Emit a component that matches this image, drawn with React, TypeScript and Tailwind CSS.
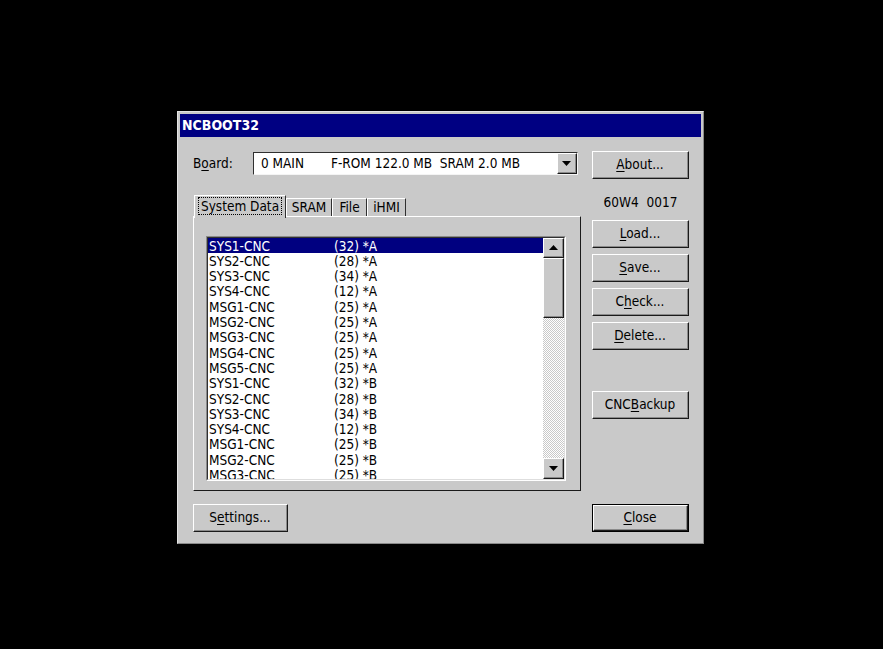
import React from "react";

const rows: [string, string][] = [
  ["SYS1-CNC", "(32) *A"],
  ["SYS2-CNC", "(28) *A"],
  ["SYS3-CNC", "(34) *A"],
  ["SYS4-CNC", "(12) *A"],
  ["MSG1-CNC", "(25) *A"],
  ["MSG2-CNC", "(25) *A"],
  ["MSG3-CNC", "(25) *A"],
  ["MSG4-CNC", "(25) *A"],
  ["MSG5-CNC", "(25) *A"],
  ["SYS1-CNC", "(32) *B"],
  ["SYS2-CNC", "(28) *B"],
  ["SYS3-CNC", "(34) *B"],
  ["SYS4-CNC", "(12) *B"],
  ["MSG1-CNC", "(25) *B"],
  ["MSG2-CNC", "(25) *B"],
  ["MSG3-CNC", "(25) *B"],
];

function Tri({ up }: { up?: boolean }) {
  return (
    <svg width="9" height="5" viewBox="0 0 9 5">
      {up ? <polygon points="0,5 9,5 4.5,0" fill="#000" /> : <polygon points="0,0 9,0 4.5,5" fill="#000" />}
    </svg>
  );
}

function Raised({ className, children }: { className: string; children?: React.ReactNode }) {
  return (
    <div className={"flex border-t border-l border-t-white border-l-white border-r border-b border-r-[#1a1a1a] border-b-[#1a1a1a] " + className}>
      <div className="flex flex-1 items-center justify-center border-r border-b border-r-[#8a8a8a] border-b-[#8a8a8a]">
        {children}
      </div>
    </div>
  );
}

function Btn({ children, className }: { children: React.ReactNode; className: string }) {
  return <Raised className={"h-[28px] " + className}>{children}</Raised>;
}

export default function App() {
  return (
    <div className="w-[883px] h-[649px] bg-black pt-[111px] pl-[177px] font-['DejaVu_Sans_Condensed','DejaVu_Sans',sans-serif] text-[13.5px] text-black">
      <div className="flex h-[433px] w-[527px] flex-col border-t border-l border-t-[#e4e4e4] border-l-[#e4e4e4] border-r border-b border-r-[#8a8a8a] border-b-[#8a8a8a] bg-[#c9c9c9] p-[2px]">
        {/* title bar */}
        <div className="flex h-[23px] items-center bg-[#000082] pl-[2px] text-[14px] font-bold text-white">
          NCBOOT32
        </div>
        {/* client */}
        <div className="flex flex-1 pl-[13px]">
          {/* left column */}
          <div className="flex w-[388px] flex-col">
            <div className="mt-[14px] flex h-[28px] items-start">
              <div className="mt-[1px] flex h-[23px] w-[60px] items-center">
                B<u className="underline-offset-2">o</u>ard:
              </div>
              <div className="mt-[1px] flex h-[23px] w-[325px] border-t border-l border-t-[#303030] border-l-[#303030] border-r border-b border-r-[#f4f4f4] border-b-[#f4f4f4] bg-white">
                <div className="flex flex-1 items-center pl-[7px] whitespace-pre">
                  <span className="w-[70px]">0 MAIN</span>
                  <span>F-ROM 122.0 MB  SRAM 2.0 MB</span>
                </div>
                <Raised className="w-[20px] bg-[#c9c9c9]">
                  <Tri />
                </Raised>
              </div>
            </div>

            {/* tabs */}
            <div className="relative z-10 mt-[16px] flex h-[23px] items-end">
              <div className="ml-[1px] flex h-[23px] w-[92px] items-start justify-center border-t border-l border-t-white border-l-white border-r border-r-[#303030] bg-[#c9c9c9] pt-[1px]">
                <span className="border border-dotted border-black px-[2px] leading-[16px]">System Data</span>
              </div>
              <div className="mb-[2px] flex h-[18px] w-[46px] items-center justify-center border-t border-l border-t-white border-l-white border-r border-r-[#303030]">
                SRAM
              </div>
              <div className="mb-[2px] flex h-[18px] w-[35px] items-center justify-center border-t border-l border-t-white border-l-white border-r border-r-[#303030]">
                File
              </div>
              <div className="mb-[2px] flex h-[18px] w-[39px] items-center justify-center border-t border-l border-t-white border-l-white border-r border-r-[#303030]">
                iHMI
              </div>
            </div>

            {/* panel */}
            <div className="-mt-[2px] flex h-[275px] w-[388px] flex-col border-t border-l border-t-white border-l-white border-r border-b border-r-[#1a1a1a] border-b-[#1a1a1a] pt-[19px] pl-[12px]">
              <div className="flex h-[245px] w-[360px] border-t border-l border-t-[#8a8a8a] border-l-[#8a8a8a] border-r border-b border-r-white border-b-white">
                <div className="flex flex-1 border-t border-l border-t-[#303030] border-l-[#303030] border-r border-b border-r-[#dedede] border-b-[#dedede] bg-white">
                  <div className="flex-1 overflow-hidden">
                    {rows.map(([n, c], i) => (
                      <div
                        key={i}
                        className={
                          i === 0
                            ? "flex h-[15.3px] items-center whitespace-pre bg-[#000080] pl-[1px] text-white"
                            : "flex h-[15.3px] items-center whitespace-pre pl-[1px]"
                        }
                      >
                        <span className="w-[125px]">{n}</span>
                        <span>{c}</span>
                      </div>
                    ))}
                  </div>
                  <div className="flex w-[21px] flex-col bg-[#c9c9c9]">
                    <Raised className="h-[20px]">
                      <Tri up />
                    </Raised>
                    <Raised className="h-[60px]" />
                    <div className="flex-1 bg-[repeating-conic-gradient(#c9c9c9_0%_25%,#ffffff_0%_50%)] bg-[length:2px_2px]" />
                    <Raised className="h-[21px]">
                      <Tri />
                    </Raised>
                  </div>
                </div>
              </div>
            </div>

            <Btn className="mt-[13px] w-[95px]">
              <span>
                S<u className="underline-offset-2">e</u>ttings...
              </span>
            </Btn>
          </div>

          {/* right column */}
          <div className="ml-[11px] flex w-[97px] flex-col pb-[9px]">
            <Btn className="mt-[14px] w-[97px]">
              <span>
                <u className="underline-offset-2">A</u>bout...
              </span>
            </Btn>
            <div className="mt-[15px] h-[16px] text-center leading-[16px] whitespace-pre">60W4  0017</div>
            <Btn className="mt-[10px] w-[97px]">
              <span>
                <u className="underline-offset-2">L</u>oad...
              </span>
            </Btn>
            <Btn className="mt-[6px] w-[97px]">
              <span>
                <u className="underline-offset-2">S</u>ave...
              </span>
            </Btn>
            <Btn className="mt-[6px] w-[97px]">
              <span>
                C<u className="underline-offset-2">h</u>eck...
              </span>
            </Btn>
            <Btn className="mt-[6px] w-[97px]">
              <span>
                <u className="underline-offset-2">D</u>elete...
              </span>
            </Btn>
            <Btn className="mt-[41px] w-[97px]">
              <span>
                CNC<u className="underline-offset-2">B</u>ackup
              </span>
            </Btn>
            <div className="mt-auto flex h-[28px] w-[97px] border border-black">
              <Raised className="flex-1">
                <span>
                  <u className="underline-offset-2">C</u>lose
                </span>
              </Raised>
            </div>
          </div>
        </div>
      </div>
    </div>
  );
}
